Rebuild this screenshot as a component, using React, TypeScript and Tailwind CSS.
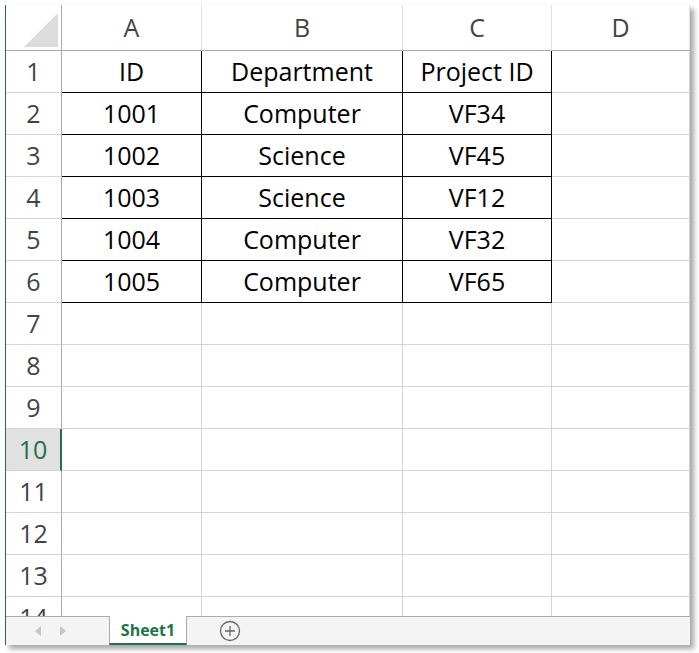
import React from "react";

const data = [
  ["ID", "Department", "Project ID"],
  ["1001", "Computer", "VF34"],
  ["1002", "Science", "VF45"],
  ["1003", "Science", "VF12"],
  ["1004", "Computer", "VF32"],
  ["1005", "Computer", "VF65"],
];

export default function App() {
  const rows = Array.from({ length: 14 }, (_, i) => i + 1);
  return (
    <div className="w-[699px] h-[653px] bg-white pt-[5px] pl-[5px]" style={{ fontFamily: '"Open Sans", "Noto Sans", sans-serif' }}>
      <div className="w-[685px] h-[640px] border-l border-[#217346] bg-white flex flex-col shadow-[4px_4px_5px_rgba(0,0,0,0.35)]">
        <div className="flex-1 overflow-hidden">
          <div className="grid grid-cols-[56px_140px_201px_149px_138px]">
            <div className="h-[46px] border-r border-b border-[#ababab] relative">
              <svg className="absolute right-[3px] bottom-[3px]" width="34" height="34"><polygon points="34,0 34,34 0,34" fill="#dcdcdc" /></svg>
            </div>
            {["A", "B", "C", "D"].map((c) => (
              <div key={c} className="h-[46px] border-r border-b border-[#ababab] border-r-[#e1e1e1] flex items-center justify-center text-[25px] text-[#444]">{c}</div>
            ))}
            {rows.map((r) => (
              <React.Fragment key={r}>
                <div className={`h-[42px] border-b border-[#d4d4d4] flex items-center justify-center text-[25px] ${r === 10 ? "bg-[#e1e1e1] text-[#217346] border-r-2 border-r-[#217346]" : "text-[#444] border-r border-r-[#ababab]"}`}>{r}</div>
                {[0, 1, 2, 3].map((c) => {
                  const inTable = r <= 6 && c < 3;
                  return (
                    <div key={c} className={`h-[42px] border-r border-b flex items-center justify-center text-[25px] text-black ${inTable ? "border-black" : "border-[#d4d4d4]"}`}>
                      {inTable ? data[r - 1][c] : ""}
                    </div>
                  );
                })}
              </React.Fragment>
            ))}
          </div>
        </div>
        <div className="h-[29px] shrink-0 bg-[#f4f4f4] border-t border-[#ababab] flex items-stretch">
          <div className="w-[103px] flex items-center pl-[29px] gap-[19px] text-[#c0c0c0]">
            <svg width="6" height="10"><polygon points="6,0 6,10 0,5" fill="#c6c6c6" /></svg>
            <svg width="6" height="10"><polygon points="0,0 0,10 6,5" fill="#c6c6c6" /></svg>
          </div>
          <div className="w-[78px] -mt-px bg-white border-x border-[#ababab] border-b-2 border-b-[#217346] flex items-center justify-center text-[16px] font-bold text-[#217346]">Sheet1</div>
          <div className="flex items-center pl-[32px]">
            <svg width="22" height="22" viewBox="0 0 22 22"><circle cx="11" cy="11" r="9.5" fill="none" stroke="#666" strokeWidth="1.3" /><path d="M11 6v10M6 11h10" stroke="#666" strokeWidth="1.3" /></svg>
          </div>
        </div>
      </div>
    </div>
  );
}
